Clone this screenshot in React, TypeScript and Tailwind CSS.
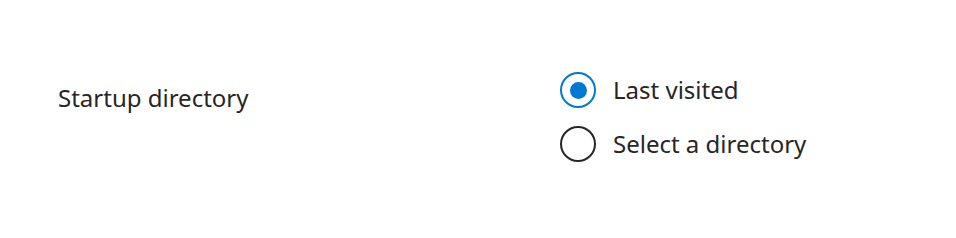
import React from "react";

function Radio({ checked, label }: { checked?: boolean; label: string }) {
  return (
    <label className="flex items-center h-[54px] gap-[17px]">
      {checked ? (
        <span className="flex items-center justify-center w-[36px] h-[36px] rounded-full border-2 border-[#0078d4]">
          <span className="w-[17px] h-[17px] rounded-full bg-[#0078d4]" />
        </span>
      ) : (
        <span className="w-[36px] h-[36px] rounded-full border-2 border-[#262626]" />
      )}
      <span className="text-[24px] text-[#262626] leading-none">{label}</span>
    </label>
  );
}

export default function App() {
  return (
    <div
      className="w-[956px] h-[238px] bg-white"
      style={{ fontFamily: '"Noto Sans", "Open Sans", sans-serif' }}
    >
      <div className="flex items-start w-full pl-[58px] pt-[63px]">
        <div className="w-[502px] text-[24px] leading-[34px] text-[#262626] mt-[18px]">Startup directory</div>
        <div className="flex flex-col">
          <Radio checked label="Last visited" />
          <Radio label="Select a directory" />
        </div>
      </div>
    </div>
  );
}
